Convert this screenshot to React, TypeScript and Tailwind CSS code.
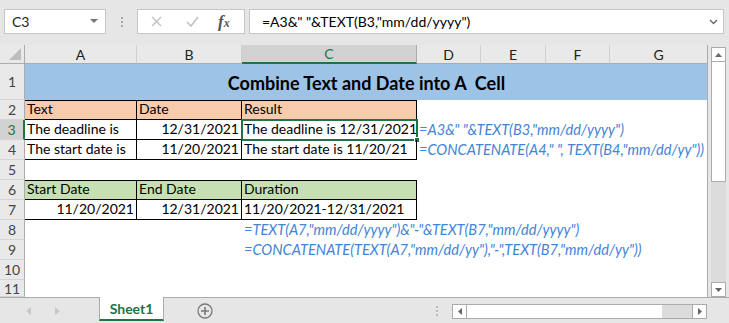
import React from "react";

type C = { t?: string; cls?: string; right?: boolean; f?: boolean };

const F = { fontFamily: "Lato, 'Noto Sans', sans-serif" };

const BT = "border-r border-b border-black";

function Cell({ c }: { c: C }) {
  return (
    <div
      className={`relative flex items-end whitespace-pre px-[2px] pb-[1px] leading-[18px] ${
        c.f ? "text-[14.6px] italic text-[#4384d6]" : "text-[14px] text-black"
      } ${c.right ? "justify-end" : ""} ${c.cls ?? ""}`}
    >
      {c.t}
    </div>
  );
}

function RowHead({ n, sel }: { n: number; sel?: boolean }) {
  return (
    <div
      className={`flex items-center justify-center text-[14px] border-b border-[#d4d4d4] ${
        sel
          ? "bg-[#d2d2d2] text-[#217346] border-r-2 border-r-[#217346]"
          : "bg-[#e9e9e9] text-[#444] border-r border-r-[#ababab]"
      }`}
    >
      {n}
    </div>
  );
}

const E: C = {};

export default function App() {
  const rows: { n: number; cells: C[] }[] = [
    {
      n: 2,
      cells: [
        { t: "Text", cls: `bg-[#f8cbad] ${BT} border-t` },
        { t: "Date", cls: `bg-[#f8cbad] ${BT} border-t` },
        { t: "Result", cls: `bg-[#f8cbad] ${BT} border-t` },
        E, E, E, E,
      ],
    },
    {
      n: 3,
      cells: [
        { t: "The deadline is", cls: BT },
        { t: "12/31/2021", cls: BT, right: true },
        { t: "The deadline is 12/31/2021", cls: `${BT} sel` },
        { t: '=A3&" "&TEXT(B3,"mm/dd/yyyy")', f: true },
        E, E, E,
      ],
    },
    {
      n: 4,
      cells: [
        { t: "The start date is", cls: BT },
        { t: "11/20/2021", cls: BT, right: true },
        { t: "The start date is 11/20/21", cls: BT },
        { t: '=CONCATENATE(A4," ", TEXT(B4,"mm/dd/yy"))', f: true },
        E, E, E,
      ],
    },
    { n: 5, cells: [E, E, E, E, E, E, E] },
    {
      n: 6,
      cells: [
        { t: "Start Date", cls: `bg-[#c6e0b4] ${BT} border-t` },
        { t: "End Date", cls: `bg-[#c6e0b4] ${BT} border-t` },
        { t: "Duration", cls: `bg-[#c6e0b4] ${BT} border-t` },
        E, E, E, E,
      ],
    },
    {
      n: 7,
      cells: [
        { t: "11/20/2021", cls: BT, right: true },
        { t: "12/31/2021", cls: BT, right: true },
        { t: "11/20/2021-12/31/2021", cls: BT },
        E, E, E, E,
      ],
    },
    {
      n: 8,
      cells: [E, E, { t: '=TEXT(A7,"mm/dd/yyyy")&"-"&TEXT(B7,"mm/dd/yyyy")', f: true }, E, E, E, E],
    },
    {
      n: 9,
      cells: [
        E, E,
        { t: '=CONCATENATE(TEXT(A7,"mm/dd/yy"),"-",TEXT(B7,"mm/dd/yy"))', f: true },
        E, E, E, E,
      ],
    },
    { n: 10, cells: [E, E, E, E, E, E, E] },
    { n: 11, cells: [E, E, E, E, E, E, E] },
  ];

  const colHeads = ["A", "B", "C", "D", "E", "F", "G"];

  return (
    <div className="w-[729px] h-[323px] bg-[#e6e6e6] flex flex-col overflow-hidden" style={F}>
      {/* formula bar */}
      <div className="h-[45px] flex items-start pt-[9px] pl-[4px] pr-[5px]">
        <div className="w-[102px] h-[25px] bg-white border border-[#c6c6c6] flex items-center justify-between pl-[7px] pr-[7px]">
          <span className="text-[14px] text-[#222]">C3</span>
          <svg width="8" height="5" viewBox="0 0 8 5">
            <path d="M0 0 L8 0 L4 4 Z" fill="#777" />
          </svg>
        </div>
        <div className="w-[31px] h-[25px] flex flex-col items-center justify-center gap-[2px]">
          <span className="w-[2px] h-[2px] bg-[#aaa]" />
          <span className="w-[2px] h-[2px] bg-[#aaa]" />
          <span className="w-[2px] h-[2px] bg-[#aaa]" />
        </div>
        <div className="w-[108px] h-[25px] bg-white border border-[#c6c6c6] flex items-center pl-[13px]">
          <svg width="11" height="11" viewBox="0 0 11 11">
            <path d="M1 1 L10 10 M10 1 L1 10" stroke="#c2c2c2" strokeWidth="1.4" />
          </svg>
          <svg className="ml-[24px]" width="13" height="11" viewBox="0 0 13 11">
            <path d="M1 6 L5 10 L12 1" stroke="#c2c2c2" strokeWidth="1.6" fill="none" />
          </svg>
          <span
            className="ml-[19px] text-[17px] italic text-[#555] font-semibold leading-none"
            style={{ fontFamily: "'Liberation Serif', serif" }}
          >
            f<span className="text-[12px]">x</span>
          </span>
        </div>
        <div className="ml-[4px] flex-1 h-[25px] bg-white border border-[#c6c6c6] flex items-center justify-between pl-[12px] pr-[5px]">
          <span className="text-[14px] text-black whitespace-pre">{'=A3&" "&TEXT(B3,"mm/dd/yyyy")'}</span>
          <svg width="9" height="6" viewBox="0 0 9 6">
            <path d="M1 1 L4.5 4.5 L8 1" stroke="#666" strokeWidth="1.3" fill="none" />
          </svg>
        </div>
      </div>

      {/* sheet */}
      <div className="flex h-[252px]">
        <div className="w-[708px] bg-white grid grid-cols-[25px_112px_105px_175px_64px_65px_64px_98px] grid-rows-[19px_36px_repeat(9,20px)_17px] border-r border-[#ababab] overflow-hidden">
          {/* corner */}
          <div className="bg-[#e9e9e9] border-r border-b border-[#ababab] flex items-end justify-end p-[3px]">
            <svg width="12" height="12" viewBox="0 0 12 12">
              <path d="M12 0 L12 12 L0 12 Z" fill="#bdbdbd" />
            </svg>
          </div>
          {colHeads.map((h) => (
            <div
              key={h}
              className={`flex items-center justify-center text-[14px] ${
                h === "C"
                  ? "bg-[#d2d2d2] text-[#217346] border-b-2 border-b-[#217346] border-r border-r-[#ababab]"
                  : "bg-[#e9e9e9] text-[#222] border-b border-b-[#ababab] border-r border-r-[#d0d0d0]"
              }`}
            >
              {h}
            </div>
          ))}

          {/* row 1 */}
          <RowHead n={1} />
          <div className="col-span-7 bg-[#9dc3e6] flex items-center justify-center pt-[3px] text-[18px] font-bold text-black whitespace-pre">
            {"Combine Text and Date into A  Cell"}
          </div>

          {rows.map((r) => (
            <React.Fragment key={r.n}>
              <RowHead n={r.n} sel={r.n === 3} />
              {r.cells.map((c, i) =>
                c.cls && c.cls.includes("sel") ? (
                  <div key={i} className="relative">
                    <Cell c={{ ...c, cls: c.cls.replace("sel", "") + " h-full" }} />
                    <div className="absolute -left-[1px] -top-[1px] -right-[1px] -bottom-[1px] border-2 border-[#217346] pointer-events-none" />
                    <div className="absolute -right-[3px] -bottom-[3px] w-[6px] h-[6px] bg-[#217346] border border-white" />
                  </div>
                ) : (
                  <Cell key={i} c={c} />
                )
              )}
            </React.Fragment>
          ))}
        </div>

        {/* vertical scrollbar */}
        <div className="flex-1 flex flex-col items-center pt-[2px]">
          <div className="w-[15px] h-[15px] bg-white border border-[#ababab] flex items-center justify-center">
            <svg width="7" height="4" viewBox="0 0 7 4">
              <path d="M0 4 L7 4 L3.5 0 Z" fill="#666" />
            </svg>
          </div>
          <div className="w-[15px] h-[120px] bg-white border border-t-0 border-[#ababab]" />
          <div className="flex-1 w-[15px] bg-[#dcdcdc]" />
          <div className="w-[15px] h-[15px] bg-white border border-[#ababab] flex items-center justify-center">
            <svg width="7" height="4" viewBox="0 0 7 4">
              <path d="M0 0 L7 0 L3.5 4 Z" fill="#666" />
            </svg>
          </div>
        </div>
      </div>

      {/* tab bar */}
      <div className="h-[26px] border-t border-[#ababab] flex items-start relative">
        <div className="w-[99px] h-full flex items-center pl-[26px] gap-[24px]">
          <svg width="5" height="8" viewBox="0 0 5 8">
            <path d="M5 0 L5 8 L0 4 Z" fill="#c8c8c8" />
          </svg>
          <svg width="5" height="8" viewBox="0 0 5 8">
            <path d="M0 0 L0 8 L5 4 Z" fill="#c8c8c8" />
          </svg>
        </div>
        <div className="w-[65px] h-[24px] -mt-[1px] bg-white border-x border-[#ababab] border-b-2 border-b-[#217346] flex items-center justify-center text-[14px] font-bold text-[#217346]">
          Sheet1
        </div>
        <div className="ml-[33px] h-full flex items-center">
          <svg width="16" height="16" viewBox="0 0 16 16">
            <circle cx="8" cy="8" r="7" stroke="#7a7a7a" strokeWidth="1.3" fill="none" />
            <path d="M8 4 L8 12 M4 8 L12 8" stroke="#7a7a7a" strokeWidth="1.6" />
          </svg>
        </div>
        <div className="ml-[223px] h-full flex items-center gap-[2px]">
          <div className="flex flex-col gap-[2px]">
            <span className="w-[2px] h-[2px] bg-[#bbb]" />
            <span className="w-[2px] h-[2px] bg-[#bbb]" />
            <span className="w-[2px] h-[2px] bg-[#bbb]" />
          </div>
        </div>
        <div className="ml-[14px] mt-[6px] flex h-[15px]">
          <div className="w-[15px] h-[15px] bg-white border border-[#ababab] flex items-center justify-center">
            <svg width="4" height="7" viewBox="0 0 4 7">
              <path d="M4 0 L4 7 L0 3.5 Z" fill="#666" />
            </svg>
          </div>
          <div className="w-[195px] h-[15px] bg-white border-y border-[#ababab]" />
          <div className="w-[30px] h-[15px] bg-[#dcdcdc] border-y border-[#ababab]" />
          <div className="w-[15px] h-[15px] bg-white border border-[#ababab] flex items-center justify-center">
            <svg width="4" height="7" viewBox="0 0 4 7">
              <path d="M0 0 L0 7 L4 3.5 Z" fill="#666" />
            </svg>
          </div>
        </div>
      </div>
    </div>
  );
}
